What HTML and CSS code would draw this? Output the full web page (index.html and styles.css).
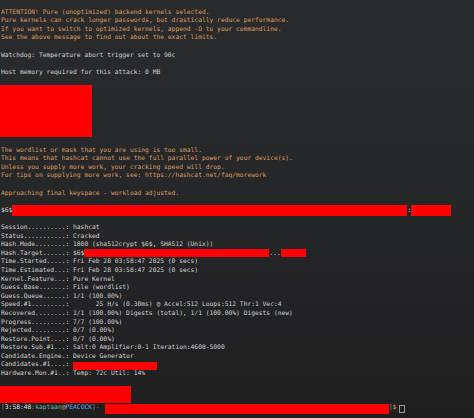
FILE: index.html
```html
<!DOCTYPE html>
<html>
<head>
<meta charset="utf-8">
<link rel="stylesheet" href="styles.css">
</head>
<body>
<div class="term">
<div class="l o">ATTENTION! Pure (unoptimized) backend kernels selected.</div>
<div class="l o">Pure kernels can crack longer passwords, but drastically reduce performance.</div>
<div class="l o">If you want to switch to optimized kernels, append -O to your commandline.</div>
<div class="l o">See the above message to find out about the exact limits.</div>
<div class="l"></div>
<div class="l">Watchdog: Temperature abort trigger set to 90c</div>
<div class="l"></div>
<div class="l">Host memory required for this attack: 0 MB</div>
<div class="l"></div>
<div class="red-block"></div>
<div class="l"></div>
<div class="l o">The wordlist or mask that you are using is too small.</div>
<div class="l o">This means that hashcat cannot use the full parallel power of your device(s).</div>
<div class="l o">Unless you supply more work, your cracking speed will drop.</div>
<div class="l o">For tips on supplying more work, see: https://hashcat.net/faq/morework</div>
<div class="l"></div>
<div class="l o">Approaching final keyspace - workload adjusted.</div>
<div class="l"></div>
<div class="l">$6$<span class="r r-hash"></span>:<span class="r r-pass"></span></div>
<div class="l"></div>
<div class="l">Session..........: hashcat</div>
<div class="l">Status...........: Cracked</div>
<div class="l">Hash.Mode........: 1800 (sha512crypt $6$, SHA512 (Unix))</div>
<div class="l">Hash.Target......: $6$<span class="r r-t1"></span>...<span class="r r-t2"></span></div>
<div class="l">Time.Started.....: Fri Feb 28 03:58:47 2025 (0 secs)</div>
<div class="l">Time.Estimated...: Fri Feb 28 03:58:47 2025 (0 secs)</div>
<div class="l">Kernel.Feature...: Pure Kernel</div>
<div class="l">Guess.Base.......: File (wordlist)</div>
<div class="l">Guess.Queue......: 1/1 (100.00%)</div>
<div class="l">Speed.#1.........:       25 H/s (0.30ms) @ Accel:512 Loops:512 Thr:1 Vec:4</div>
<div class="l">Recovered........: 1/1 (100.00%) Digests (total), 1/1 (100.00%) Digests (new)</div>
<div class="l">Progress.........: 7/7 (100.00%)</div>
<div class="l">Rejected.........: 0/7 (0.00%)</div>
<div class="l">Restore.Point....: 0/7 (0.00%)</div>
<div class="l">Restore.Sub.#1...: Salt:0 Amplifier:0-1 Iteration:4608-5000</div>
<div class="l">Candidate.Engine.: Device Generator</div>
<div class="l">Candidates.#1....: <span class="r r-cand"></span></div>
<div class="l">Hardware.Mon.#1..: Temp: 72c Util: 14%</div>
<div class="l"></div>
<div class="red-block2"></div>
<div class="l prompt"><span class="br">[</span><span class="time">3:58:48</span><span class="br">:</span><span class="user">kaptaan</span><span class="o">@</span><span class="host">PEACOCK</span><span class="br">]</span><span class="br">-</span><span class="r r-path"></span><span class="br">]</span><span class="o">$</span><span class="cursor"></span></div>
</div>
</body>
</html>
```
FILE: styles.css
```css
html, body {
  margin: 0;
  padding: 0;
}
body {
  width: 474px;
  height: 418px;
  overflow: hidden;
  background: linear-gradient(180deg, #2a2b2d 0%, #262729 45%, #1f1f20 100%);
}
.term {
  padding: 7.7px 0 0 1px;
  font-family: "DejaVu Sans Mono", monospace;
  font-size: 6.3px;
  color: #d2d2d2;
}
.l {
  height: 8.6px;
  line-height: 8.6px;
  white-space: pre;
}
.o {
  color: #dc9d60;
}
.red-block {
  width: 92px;
  height: 52px;
  margin-left: -1px;
  background: #fe0000;
}
.red-block2 {
  width: 131px;
  height: 17px;
  margin-left: -1px;
  background: #fe0000;
}
.r {
  display: inline-block;
  background: #fe0000;
  vertical-align: top;
}
.r-hash {
  width: 395px;
  height: 11px;
  margin-top: -0.5px;
}
.r-pass {
  width: 40px;
  height: 11px;
  margin-top: -0.5px;
}
.r-t1 {
  width: 185px;
  height: 8px;
  margin-top: 0.5px;
}
.r-t2 {
  width: 25px;
  height: 8px;
  margin-top: 0.5px;
}
.r-cand {
  width: 84px;
  height: 8px;
  margin-top: 1.5px;
}
.r-path {
  width: 284px;
  height: 10px;
  margin-top: 0.7px;
  margin-left: 5px;
}
.prompt .br {
  color: #8a8a8a;
}
.prompt .time {
  color: #e6e6e6;
}
.prompt .user {
  color: #6db7a0;
}
.prompt .host {
  color: #6aa8e0;
}
.cursor {
  display: inline-block;
  width: 4px;
  height: 6px;
  margin-left: 3px;
  margin-top: 1.5px;
  vertical-align: top;
  border: 1px solid #9a9a9a;
}
```
